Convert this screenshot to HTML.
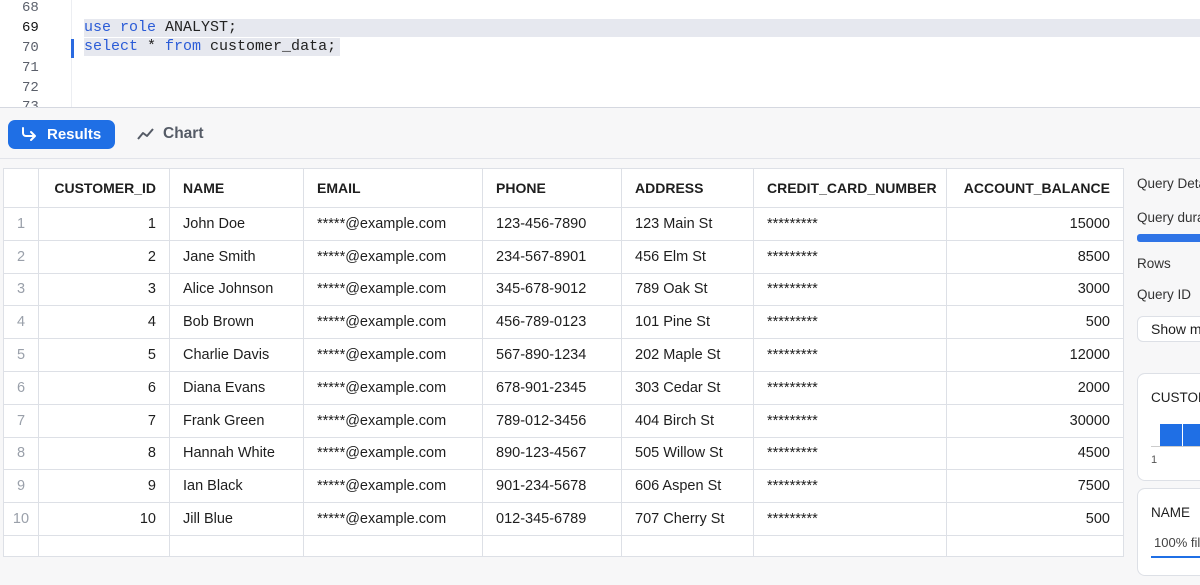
<!DOCTYPE html>
<html><head><style>
*{margin:0;padding:0;box-sizing:border-box}
body{width:1200px;height:585px;overflow:hidden;background:#f7f7f8;font-family:"Liberation Sans",sans-serif;position:relative;color:#1e1e1e}
.ed{position:absolute;left:0;top:0;width:1200px;height:108px;background:#fff;border-bottom:1px solid #d5d8e0;overflow:hidden}
.gut{position:absolute;left:0;top:0;width:72px;height:108px;border-right:1px solid #eceef2}
.ln{position:absolute;left:22px;font:14px "Liberation Mono",monospace;color:#5a5f6a}
.code{position:absolute;left:84px;font:15px "Liberation Mono",monospace;color:#222}
.kw{color:#2a5bd7}
.sel{position:absolute;background:#e6e8ef}
.tb{position:absolute;top:109px;left:0;width:1200px;height:50px;border-bottom:1px solid #e2e4ea}
.btn{position:absolute;left:8px;top:120px;width:107px;height:29px;background:#1f6fe5;border-radius:7px;color:#fff;font-weight:bold;font-size:15px;line-height:29px;padding-left:39px}
.chart{position:absolute;left:163px;top:125px;font-size:15.5px;color:#555b66;font-weight:bold}
table{position:absolute;left:3px;top:168px;border-collapse:collapse;background:#fff;font-size:14.5px;table-layout:fixed;width:1120px}
td,th{border:1px solid #dde0e6;height:32.8px;padding:0 13px;white-space:nowrap;text-align:left;font-weight:normal;overflow:hidden}
th{height:39px;font-weight:bold;font-size:14px;color:#1e1e1e}
tr.e td{height:21px}
td.n{text-align:center;color:#9aa0aa;padding:0}
td.r{text-align:right}
.rp{position:absolute;left:1137px;font-size:13.5px;color:#333;white-space:nowrap}
.card{position:absolute;left:1137px;width:80px;border:1px solid #dde0e6;border-radius:8px;background:#fff;white-space:nowrap;overflow:hidden}
</style></head><body>
<div class="ed">
<div class="gut"></div>
<div class="sel" style="left:84px;top:19px;width:1116px;height:18px"></div>
<div class="sel" style="left:84px;top:38px;width:256px;height:18px"></div>
<div style="position:absolute;left:71px;top:39px;width:3px;height:19px;background:#2a6ae0"></div>
<div class="ln" style="top:0px">68</div>
<div class="ln" style="top:20px;color:#111">69</div>
<div class="ln" style="top:40px">70</div>
<div class="ln" style="top:60px">71</div>
<div class="ln" style="top:80px">72</div>
<div class="ln" style="top:99px">73</div>
<div class="code" style="top:19px"><span class="kw">use role</span> ANALYST;</div>
<div class="code" style="top:38px"><span class="kw">select</span> * <span class="kw">from</span> customer_data;</div>
</div>
<div class="tb"></div>
<div class="btn"><svg style="position:absolute;left:12px;top:7px" width="18" height="15" viewBox="0 0 18 15"><path d="M3 1v5a3 3 0 0 0 3 3h9M11 5l4 4-4 4" fill="none" stroke="#fff" stroke-width="2" stroke-linecap="round" stroke-linejoin="round"/></svg>Results</div>
<svg style="position:absolute;left:137px;top:127px" width="17" height="14" viewBox="0 0 17 14"><path d="M1 12l5-6 4 3 6-7" fill="none" stroke="#555b66" stroke-width="2" stroke-linejoin="round"/></svg>
<div class="chart">Chart</div>
<table>
<colgroup><col style="width:35px"><col style="width:131px"><col style="width:134px"><col style="width:179px"><col style="width:139px"><col style="width:132px"><col style="width:193px"><col style="width:177px"></colgroup>
<tr><th></th><th style="text-align:right">CUSTOMER_ID</th><th>NAME</th><th>EMAIL</th><th>PHONE</th><th>ADDRESS</th><th>CREDIT_CARD_NUMBER</th><th style="text-align:right">ACCOUNT_BALANCE</th></tr>
<tr><td class="n">1</td><td class="r">1</td><td>John Doe</td><td>*****@example.com</td><td>123-456-7890</td><td>123 Main St</td><td>*********</td><td class="r">15000</td></tr>
<tr><td class="n">2</td><td class="r">2</td><td>Jane Smith</td><td>*****@example.com</td><td>234-567-8901</td><td>456 Elm St</td><td>*********</td><td class="r">8500</td></tr>
<tr><td class="n">3</td><td class="r">3</td><td>Alice Johnson</td><td>*****@example.com</td><td>345-678-9012</td><td>789 Oak St</td><td>*********</td><td class="r">3000</td></tr>
<tr><td class="n">4</td><td class="r">4</td><td>Bob Brown</td><td>*****@example.com</td><td>456-789-0123</td><td>101 Pine St</td><td>*********</td><td class="r">500</td></tr>
<tr><td class="n">5</td><td class="r">5</td><td>Charlie Davis</td><td>*****@example.com</td><td>567-890-1234</td><td>202 Maple St</td><td>*********</td><td class="r">12000</td></tr>
<tr><td class="n">6</td><td class="r">6</td><td>Diana Evans</td><td>*****@example.com</td><td>678-901-2345</td><td>303 Cedar St</td><td>*********</td><td class="r">2000</td></tr>
<tr><td class="n">7</td><td class="r">7</td><td>Frank Green</td><td>*****@example.com</td><td>789-012-3456</td><td>404 Birch St</td><td>*********</td><td class="r">30000</td></tr>
<tr><td class="n">8</td><td class="r">8</td><td>Hannah White</td><td>*****@example.com</td><td>890-123-4567</td><td>505 Willow St</td><td>*********</td><td class="r">4500</td></tr>
<tr><td class="n">9</td><td class="r">9</td><td>Ian Black</td><td>*****@example.com</td><td>901-234-5678</td><td>606 Aspen St</td><td>*********</td><td class="r">7500</td></tr>
<tr><td class="n">10</td><td class="r">10</td><td>Jill Blue</td><td>*****@example.com</td><td>012-345-6789</td><td>707 Cherry St</td><td>*********</td><td class="r">500</td></tr>
<tr class="e"><td></td><td></td><td></td><td></td><td></td><td></td><td></td><td></td></tr>
</table>
<div class="rp" style="top:176px">Query Details</div>
<div class="rp" style="top:210px">Query duration</div>
<div style="position:absolute;left:1137px;top:234px;width:70px;height:8px;background:#2f74e6;border-radius:3px"></div>
<div class="rp" style="top:256px">Rows</div>
<div class="rp" style="top:287px">Query ID</div>
<div class="card" style="top:316px;height:26px;border-radius:6px;padding:4px 0 0 13px;font-size:14px">Show more</div>
<div class="card" style="top:373px;height:108px">
<div style="position:absolute;left:13px;top:16px;font-size:13.5px">CUSTOMER_ID</div>
<div style="position:absolute;left:22px;top:50px;width:60px;height:22px;background:#1f6fe5"></div>
<div style="position:absolute;left:44px;top:50px;width:1px;height:22px;background:#fff"></div>
<div style="position:absolute;left:13px;top:72px;width:70px;height:1px;background:#ccc"></div>
<div style="position:absolute;left:13px;top:80px;font-size:11px;color:#555">1</div>
</div>
<div class="card" style="top:488px;height:88px">
<div style="position:absolute;left:13px;top:16px;font-size:13.5px">NAME</div>
<div style="position:absolute;left:16px;top:46px;font-size:13px;color:#444">100% filled</div>
<div style="position:absolute;left:13px;top:67px;width:70px;height:2px;background:#1f6fe5"></div>
</div>
</body></html>
